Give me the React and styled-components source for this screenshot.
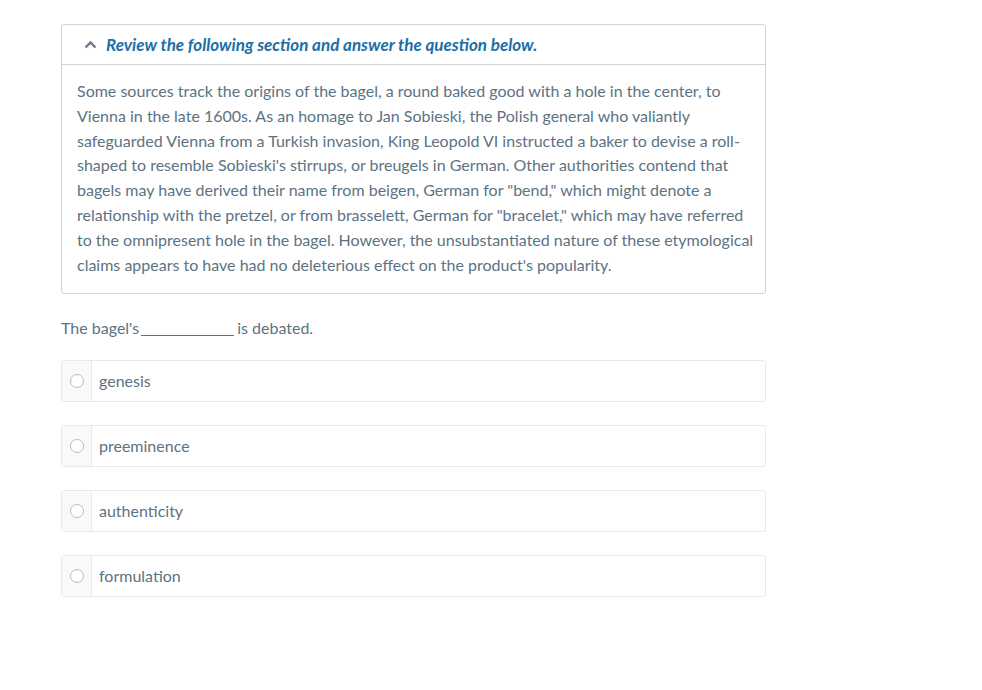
import styled, { createGlobalStyle } from "styled-components";

const GlobalStyle = createGlobalStyle`
  body {
    margin: 0;
    background: #fff;
    font-family: Lato, "Open Sans", sans-serif;
  }
`;

const Page = styled.div`
  width: 705px;
  padding: 24px 0 0 61px;
`;

const Passage = styled.section`
  border: 1px solid #d0d4d8;
  border-radius: 3px;
`;

const PassageHeader = styled.div`
  display: flex;
  align-items: center;
  gap: 9px;
  height: 39px;
  padding-left: 22px;
  border-bottom: 1px solid #d0d4d8;
  color: #1b6fa6;
  font-size: 17px;
  font-weight: 700;
  font-style: italic;
`;

const PassageBody = styled.div`
  padding: 14px 8px 16px 15px;
  color: #5c7384;
  font-size: 16px;
  line-height: 24.8px;
`;

const Line = styled.span`
  display: block;
  white-space: nowrap;
`;

const Question = styled.p`
  margin: 24px 0 23px;
  color: #5c7384;
  font-size: 16px;
`;

const Blank = styled.span`
  display: inline-block;
  width: 93px;
  margin: 0 3px 0 2px;
  border-bottom: 1px solid #5c7384;
  vertical-align: -2px;
`;

const Options = styled.div`
  display: flex;
  flex-direction: column;
  gap: 23px;
`;

const Option = styled.label`
  display: flex;
  height: 40px;
  border: 1px solid #e7e9eb;
  border-radius: 3px;
  overflow: hidden;
  cursor: pointer;
`;

const RadioCell = styled.span`
  display: flex;
  align-items: center;
  justify-content: center;
  width: 29px;
  background: #f9f9f9;
  border-right: 1px solid #e7e9eb;
`;

const Radio = styled.span`
  width: 12px;
  height: 12px;
  border: 1px solid #b9bcbf;
  border-radius: 50%;
  background: #fff;
`;

const OptionText = styled.span`
  display: flex;
  align-items: center;
  padding: 0 0 2px 7px;
  color: #5c7384;
  font-size: 16px;
`;

const passage = [
  "Some sources track the origins of the bagel, a round baked good with a hole in the center, to",
  "Vienna in the late 1600s. As an homage to Jan Sobieski, the Polish general who valiantly",
  "safeguarded Vienna from a Turkish invasion, King Leopold VI instructed a baker to devise a roll-",
  "shaped to resemble Sobieski's stirrups, or breugels in German. Other authorities contend that",
  'bagels may have derived their name from beigen, German for "bend," which might denote a',
  'relationship with the pretzel, or from brasselett, German for "bracelet," which may have referred',
  "to the omnipresent hole in the bagel. However, the unsubstantiated nature of these etymological",
  "claims appears to have had no deleterious effect on the product's popularity.",
];

const choices = ["genesis", "preeminence", "authenticity", "formulation"];

export default function App() {
  return (
    <>
      <GlobalStyle />
      <Page>
        <Passage>
          <PassageHeader>
            <svg width="13" height="9" viewBox="0 0 13 9">
              <path d="M1.5 7.5 L6.5 2.5 L11.5 7.5" fill="none" stroke="#6b7a86" strokeWidth="2.4" />
            </svg>
            Review the following section and answer the question below.
          </PassageHeader>
          <PassageBody>
            {passage.map((l) => (
              <Line key={l}>{l}</Line>
            ))}
          </PassageBody>
        </Passage>
        <Question>
          The bagel's<Blank />is debated.
        </Question>
        <Options>
          {choices.map((c) => (
            <Option key={c}>
              <RadioCell>
                <Radio />
              </RadioCell>
              <OptionText>{c}</OptionText>
            </Option>
          ))}
        </Options>
      </Page>
    </>
  );
}
